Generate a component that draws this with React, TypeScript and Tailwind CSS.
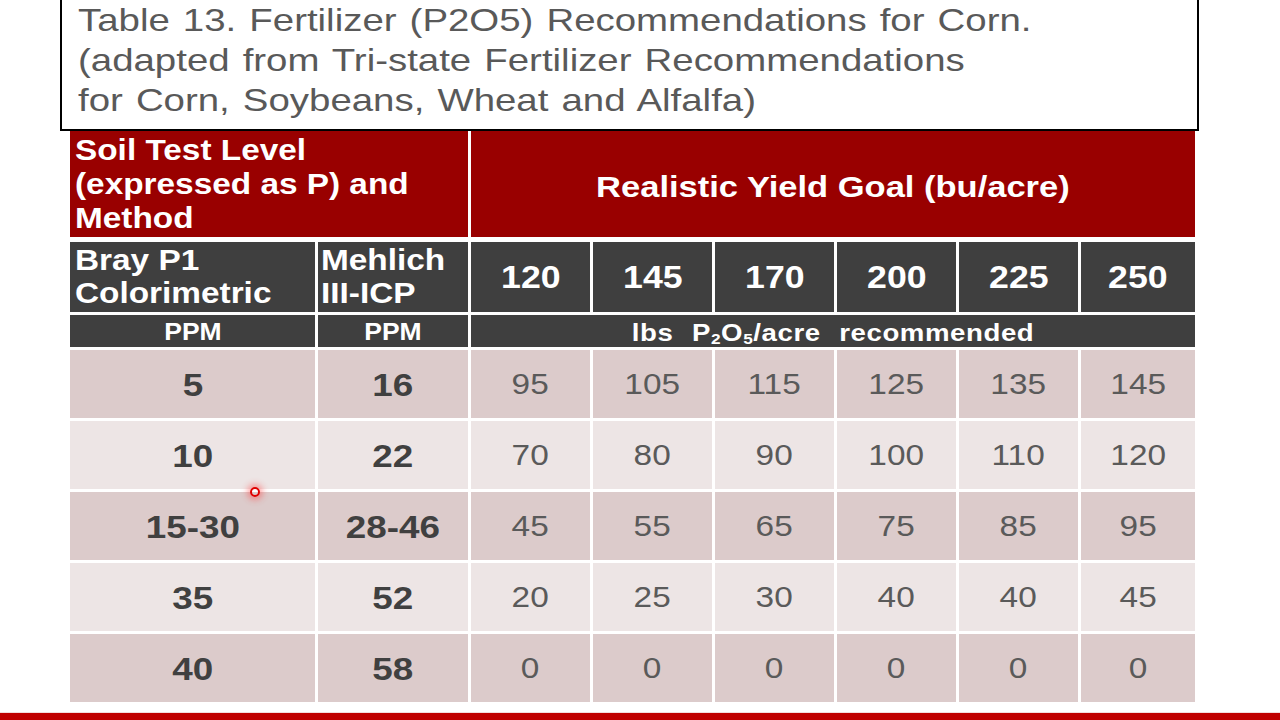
const yields = ["120", "145", "170", "200", "225", "250"];

const rows = [
  { bray: "5", mehlich: "16", values: ["95", "105", "115", "125", "135", "145"] },
  { bray: "10", mehlich: "22", values: ["70", "80", "90", "100", "110", "120"] },
  { bray: "15-30", mehlich: "28-46", values: ["45", "55", "65", "75", "85", "95"] },
  { bray: "35", mehlich: "52", values: ["20", "25", "30", "40", "40", "45"] },
  { bray: "40", mehlich: "58", values: ["0", "0", "0", "0", "0", "0"] },
];

// the slide is stretched sideways in the recording, so text is widened to match
function Wide({ children, left = false }: { children: React.ReactNode; left?: boolean }) {
  return (
    <span
      className={`inline-block scale-x-[1.15] whitespace-nowrap ${left ? "origin-left" : "origin-center"}`}
    >
      {children}
    </span>
  );
}

export default function App() {
  return (
    <div className="relative flex h-[720px] w-[1280px] flex-col overflow-hidden bg-white font-['Liberation_Sans',Arial,sans-serif]">
      <div className="ml-[60px] h-[131px] w-[1139px] shrink-0 border-x-2 border-b-2 border-black pl-4 text-[32px] leading-[40px] text-[#595959] [word-spacing:2px]">
        <span className="inline-block origin-left scale-x-[1.2] whitespace-nowrap">
          Table 13. Fertilizer (P2O5) Recommendations for Corn.
          <br />
          (adapted from Tri-state Fertilizer Recommendations
          <br />
          for Corn, Soybeans, Wheat and Alfalfa)
        </span>
      </div>

      <div className="ml-[70px] grid w-[1125px] grid-cols-[245px_150px_119px_119px_119px_119px_119px_1fr] grid-rows-[106px_72px_32px_repeat(5,68px)] gap-x-[3px] gap-y-[3px] bg-white font-bold">
        <div className="col-span-2 flex items-center bg-[#990000] pl-[5px] text-[29px] leading-[34px] text-white">
          <Wide left>
            Soil Test Level
            <br />
            (expressed as P) and
            <br />
            Method
          </Wide>
        </div>
        <div className="col-span-6 flex items-center justify-center bg-[#990000] pt-1 text-[30px] text-white">
          <Wide>Realistic Yield Goal (bu/acre)</Wide>
        </div>

        <div className="mt-[2px] flex items-center bg-[#3f3f3f] pl-[5px] text-[29px] leading-[33px] text-white">
          <Wide left>
            Bray P1
            <br />
            Colorimetric
          </Wide>
        </div>
        <div className="mt-[2px] flex items-center bg-[#3f3f3f] pl-[3px] text-[29px] leading-[33px] text-white">
          <Wide left>
            Mehlich
            <br />
            III-ICP
          </Wide>
        </div>
        {yields.map((y) => (
          <div
            key={y}
            className="mt-[2px] flex items-center justify-center bg-[#3f3f3f] pt-[2px] text-[31px] text-white"
          >
            <Wide>{y}</Wide>
          </div>
        ))}

        <div className="flex items-center justify-center bg-[#3f3f3f] pt-[3px] text-[23px] text-white">
          <Wide>PPM</Wide>
        </div>
        <div className="flex items-center justify-center bg-[#3f3f3f] pt-[3px] text-[23px] text-white">
          <Wide>PPM</Wide>
        </div>
        <div className="col-span-6 flex items-center justify-center bg-[#3f3f3f] pt-[3px] text-[24px] tracking-[0.5px] text-white [word-spacing:9px]">
          <Wide>
            lbs P<sub className="text-[15px]">2</sub>O<sub className="text-[15px]">5</sub>/acre recommended
          </Wide>
        </div>

        {rows.map((row, i) => {
          const bg = i % 2 === 0 ? "bg-[#dccbcb]" : "bg-[#ede5e5]";
          return [
            <div
              key={`b${i}`}
              className={`flex items-center justify-center ${bg} pt-[2px] text-[32px] text-[#404040]`}
            >
              <Wide>{row.bray}</Wide>
            </div>,
            <div
              key={`m${i}`}
              className={`flex items-center justify-center ${bg} pt-[2px] text-[32px] text-[#404040]`}
            >
              <Wide>{row.mehlich}</Wide>
            </div>,
            ...row.values.map((v, j) => (
              <div
                key={`v${i}-${j}`}
                className={`flex items-center justify-center ${bg} pt-[2px] text-[29px] font-normal text-[#5a5a5a]`}
              >
                <Wide>{v}</Wide>
              </div>
            )),
          ];
        })}
      </div>

      <div className="mt-auto h-px bg-[#f3dede]" />
      <div className="h-[7px] bg-[#c00000]" />

      <div className="absolute left-[250px] top-[487px] h-[10px] w-[10px] rounded-full border-2 border-[#e00000] shadow-[0_0_6px_3px_rgba(255,60,60,0.45)]" />
    </div>
  );
}
